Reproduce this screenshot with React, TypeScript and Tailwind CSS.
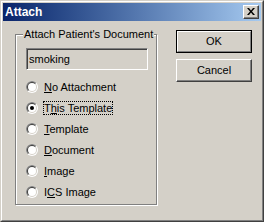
import React from "react";

function Radio({ checked }: { checked?: boolean }) {
  return (
    <svg width="12" height="12" viewBox="0 0 12 12" className="shrink-0">
      <circle cx="6" cy="6" r="6" fill="#ffffff" />
      <path d="M1.757 10.243 A6 6 0 0 1 10.243 1.757 Z" fill="#808080" />
      <circle cx="6" cy="6" r="5" fill="#d4d0c8" />
      <path d="M2.464 9.536 A5 5 0 0 1 9.536 2.464 Z" fill="#404040" />
      <circle cx="6" cy="6" r="4" fill="#ffffff" />
      {checked && <circle cx="6" cy="6" r="2" fill="#000000" />}
    </svg>
  );
}

function RadioRow({
  pre,
  key2,
  post,
  checked,
  focused,
}: {
  pre: string;
  key2: string;
  post: string;
  checked?: boolean;
  focused?: boolean;
}) {
  return (
    <div className="h-[21px] flex items-center pl-[10px]">
      <Radio checked={checked} />
      <span
        className={
          "ml-[5px] leading-[12px] border border-dotted " +
          (focused ? "border-black" : "border-transparent")
        }
      >
        {pre}
        <span className="underline underline-offset-[1px]">{key2}</span>
        {post}
      </span>
    </div>
  );
}

export default function App() {
  return (
    <div className="w-[264px] h-[222px] bg-[#d4d0c8] border border-t-[#d4d0c8] border-l-[#d4d0c8] border-r-[#404040] border-b-[#404040] font-['Liberation_Sans',Arial,sans-serif] text-[11px] text-black">
      <div className="h-full border border-t-white border-l-white border-r-[#808080] border-b-[#808080] p-px flex flex-col">
        <div className="h-[18px] shrink-0 bg-linear-to-r from-[#0a246a] to-[#a6caf0] flex items-center justify-between pl-[2px] pr-[2px]">
          <span className="text-white font-bold text-[12px] leading-[14px]">Attach</span>
          <div className="w-[16px] h-[14px] bg-[#d4d0c8] border border-t-white border-l-white border-r-[#404040] border-b-[#404040] shadow-[inset_-1px_-1px_0_#808080] flex items-center justify-center">
            <svg width="8" height="7" viewBox="0 0 8 7" className="-mt-px">
              <path d="M0 0 L2 0 L4 2.5 L6 0 L8 0 L5 3.5 L8 7 L6 7 L4 4.5 L2 7 L0 7 L3 3.5 Z" fill="#000" />
            </svg>
          </div>
        </div>
        <div className="flex pl-[12px] pt-[9px]">
          <div className="relative mt-[4px] w-[142px] h-[171px] border border-[#808080] shadow-[inset_1px_1px_0_#fff,1px_1px_0_#fff]">
            <span className="absolute left-[7px] top-[-7px] px-px bg-[#d4d0c8] leading-[13px] whitespace-nowrap">
              Attach Patient's Document
            </span>
            <div className="ml-[10px] mt-[13px] w-[122px] h-[22px] border border-t-[#808080] border-l-[#808080] border-r-white border-b-white shadow-[inset_1px_1px_0_#404040] flex items-center pl-[2px]">
              smoking
            </div>
            <div className="mt-[6px] flex flex-col">
              <RadioRow pre="" key2="N" post="o Attachment" />
              <RadioRow pre="T" key2="h" post="is Template" checked focused />
              <RadioRow pre="" key2="T" post="emplate" />
              <RadioRow pre="" key2="D" post="ocument" />
              <RadioRow pre="" key2="I" post="mage" />
              <RadioRow pre="I" key2="C" post="S Image" />
            </div>
          </div>
          <div className="ml-[19px] flex flex-col">
            <div className="w-[76px] h-[23px] border border-black">
              <div className="w-full h-full border border-t-white border-l-white border-r-[#808080] border-b-[#808080] flex items-center justify-center">
                OK
              </div>
            </div>
            <div className="mt-[6px] w-[76px] h-[23px] border border-t-white border-l-white border-r-[#404040] border-b-[#404040] shadow-[inset_-1px_-1px_0_#808080] flex items-center justify-center">
              Cancel
            </div>
          </div>
        </div>
      </div>
    </div>
  );
}
